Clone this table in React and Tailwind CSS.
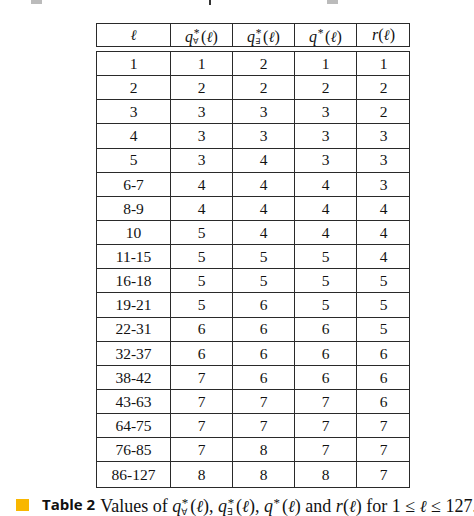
import React from 'react';

const rows = [
  ['1', 1, 2, 1, 1],
  ['2', 2, 2, 2, 2],
  ['3', 3, 3, 3, 2],
  ['4', 3, 3, 3, 3],
  ['5', 3, 4, 3, 3],
  ['6-7', 4, 4, 4, 3],
  ['8-9', 4, 4, 4, 4],
  ['10', 5, 4, 4, 4],
  ['11-15', 5, 5, 5, 4],
  ['16-18', 5, 5, 5, 5],
  ['19-21', 5, 6, 5, 5],
  ['22-31', 6, 6, 6, 5],
  ['32-37', 6, 6, 6, 6],
  ['38-42', 7, 6, 6, 6],
  ['43-63', 7, 7, 7, 6],
  ['64-75', 7, 7, 7, 7],
  ['76-85', 7, 8, 7, 7],
  ['86-127', 8, 8, 8, 7],
];

const Ell = () => <span className="italic font-['DejaVu_Serif',serif] text-[0.92em]">ℓ</span>;

// q with a star above and an optional quantifier below (offsets are in the script's own em)
const Q = ({ sub }) => (
  <span className="whitespace-nowrap">
    <span className="italic">q</span>
    <span className="relative inline-block w-[0.5em] h-[1em] align-baseline">
      <span className="absolute left-[0.05em] top-[0.22em] text-[0.72em] leading-none">*</span>
      {sub ? (
        <span className="absolute left-0 top-[1.55em] text-[0.5em] leading-none font-['DejaVu_Sans',sans-serif]">
          {sub}
        </span>
      ) : null}
    </span>
    (<Ell />)
  </span>
);

const cols = 'grid grid-cols-[74px_62px_62px_62px_53px]';
const cell = 'flex items-center justify-center border-r border-[#2a2a2a] last:border-r-0';

export default function App() {
  return (
    <div className="w-[474px] h-[516px] bg-white overflow-hidden text-[#111] font-['Liberation_Serif','Times_New_Roman',serif]">
      <div className="relative h-[23px]">
        <div className="absolute left-[31px] top-0 w-[11px] h-[4px] bg-[#bbb]" />
        <div className="absolute left-[209px] top-0 w-[2px] h-[5px] bg-[#333]" />
        <div className="absolute left-[327px] top-0 w-[11px] h-[4px] bg-[#bbb]" />
      </div>
      <div className="ml-[96px] w-[314px] text-[15.5px] leading-none">
        <div className={`${cols} h-[24px] border border-[#2a2a2a] text-[16px]`}>
          <div className={cell}><Ell /></div>
          <div className={cell}><Q sub="∀" /></div>
          <div className={cell}><Q sub="∃" /></div>
          <div className={cell}><Q /></div>
          <div className={cell}><span className="italic">r</span>(<Ell />)</div>
        </div>
        <div className="mt-[4px] border border-[#2a2a2a]">
          {rows.map((r) => (
            <div key={r[0]} className={`${cols} h-[24.15px] border-b border-[#2a2a2a] last:border-b-0`}>
              {r.map((v, i) => (
                <div key={i} className={cell}>{v}</div>
              ))}
            </div>
          ))}
        </div>
      </div>
      <div className="flex items-center h-[22px] mt-[6px] ml-[16px] whitespace-nowrap text-[18px] leading-none">
        <div className="w-[13px] h-[12px] bg-[#f9b700] mr-[13px] shrink-0" />
        <span className="font-bold text-[15px] mr-[5px] font-['Open_Sans','Liberation_Sans',sans-serif]">
          Table 2
        </span>
        <span>
          Values of <Q sub="∀" />, <Q sub="∃" />, <Q /> and <span className="italic">r</span>(<Ell />) for 1 ≤ <Ell /> ≤ 127.
        </span>
      </div>
    </div>
  );
}
